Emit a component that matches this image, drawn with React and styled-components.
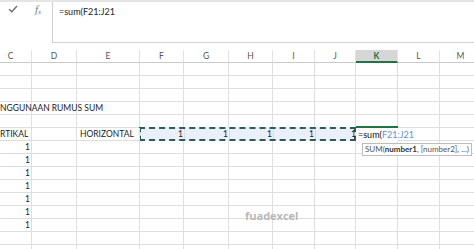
import React from 'react';
import styled, { createGlobalStyle, css } from 'styled-components';

const GlobalStyle = createGlobalStyle`
  body {
    margin: 0;
    background: #ffffff;
    overflow: hidden;
    font-family: Lato, "Open Sans", sans-serif;
  }
`;

const COLS = [
  { key: 'C', width: 42 },
  { key: 'D', width: 45 },
  { key: 'E', width: 63 },
  { key: 'F', width: 44 },
  { key: 'G', width: 45 },
  { key: 'H', width: 44 },
  { key: 'I', width: 42 },
  { key: 'J', width: 41 },
  { key: 'K', width: 42 },
  { key: 'L', width: 42 },
  { key: 'M', width: 42 },
];

const gridTemplate = COLS.map((c) => `${c.width}px`).join(' ');

const Screen = styled.div`
  position: relative;
  width: 474px;
  height: 249px;
  overflow: hidden;
`;

const FormulaBar = styled.div`
  display: flex;
  height: 43px;
  border-top: 2px solid #e4e4e4;
  box-sizing: border-box;
`;

const FormulaTools = styled.div`
  width: 52px;
  display: flex;
  align-items: flex-start;
  padding-top: 3px;
  box-sizing: border-box;
`;

const ToolIcon = styled.span`
  width: 26px;
  display: flex;
  justify-content: center;
  color: #6a6a6a;
`;

const FxGlyph = styled.span`
  font-family: "Liberation Serif", serif;
  font-style: italic;
  font-size: 11px;
  color: #7a7a7a;
  margin-left: -2px;
  margin-top: -1px;
  line-height: 10px;

  sub {
    font-size: 7px;
    vertical-align: -1px;
  }
`;

const FormulaInput = styled.div`
  flex: 1;
  border-left: 1px solid #d0d0d0;
  border-bottom: 1px solid #d0d0d0;
  padding: 3px 0 0 6px;
  font-size: 9px;
  color: #222;
  line-height: 13px;
`;

const Gap = styled.div`
  height: 7px;
`;

const Sheet = styled.div`
  display: grid;
  grid-template-columns: ${gridTemplate};
  grid-auto-rows: 13px;
  margin-left: -10px;
`;

const HeadCell = styled.div`
  display: flex;
  align-items: center;
  justify-content: center;
  font-size: 8.5px;
  color: #555;
  border-right: 1px solid #e2e2e2;
  border-bottom: 1px solid #c9c9c9;
  box-sizing: border-box;
  ${(p) =>
    p.$active &&
    css`
      background: #d6d6d6;
      color: #217346;
      font-weight: 700;
      border-bottom: 2px solid #217346;
    `}
`;

const Cell = styled.div`
  display: flex;
  align-items: center;
  justify-content: ${(p) => (p.$right ? 'flex-end' : 'flex-start')};
  padding: ${(p) => (p.$right ? '0 1px 0 0' : `0 0 0 ${p.$pad ?? 3}px`)};
  font-size: 8.5px;
  color: #222;
  white-space: nowrap;
  overflow: visible;
  border-right: 1px solid #dedede;
  border-bottom: 1px solid #dedede;
  box-sizing: border-box;
  position: relative;
  z-index: ${(p) => (p.$over ? 4 : 1)};
`;

const Range = styled.div`
  grid-column: span ${(p) => p.$span};
  display: grid;
  grid-template-columns: ${(p) => p.$cols};
  background: #e9f0f9;
  border: 2px dashed #2e5b52;
  margin: -1px 0 0 -1px;
  box-sizing: border-box;
  height: 14px;
  position: relative;
  z-index: 3;
`;

const RangeCell = styled.div`
  display: flex;
  align-items: center;
  justify-content: flex-end;
  padding-right: 1px;
  font-size: 8.5px;
  color: #222;
  border-right: 1px solid #d7dde6;
  &:last-child {
    border-right: none;
  }
`;

const EditCell = styled.div`
  position: relative;
  z-index: 4;
  display: flex;
  align-items: center;
  padding-left: 2px;
  font-size: 9px;
  color: #111;
  white-space: nowrap;
  border-top: 2px solid #217346;
  margin-top: -2px;
  height: 15px;
  box-sizing: border-box;
`;

const RefText = styled.span`
  color: #5d8fd6;
`;

const Caret = styled.span`
  display: inline-block;
  width: 1px;
  height: 10px;
  background: #222;
  margin-left: 1px;
`;

const Tip = styled.div`
  position: absolute;
  left: 362px;
  top: 143px;
  height: 11px;
  padding: 0 2px;
  border: 1px solid #bdbdbd;
  background: #fff;
  font-size: 8px;
  color: #555;
  line-height: 11px;
  white-space: nowrap;
  z-index: 5;

  b {
    color: #333;
  }
`;

const Watermark = styled.div`
  position: absolute;
  left: 245px;
  top: 208px;
  font-family: "Open Sans", sans-serif;
  font-weight: 700;
  font-size: 11px;
  color: #b8b8b8;
  z-index: 6;
`;

const CheckIcon = () => (
  <svg width="10" height="8" viewBox="0 0 10 8">
    <path d="M1 4.2 L3.8 6.8 L9 1" fill="none" stroke="#6f6f6f" strokeWidth="1.4" />
  </svg>
);

const ROW_COUNT = 15;

const rowContent = (r) => {
  const cells = {};
  if (r === 3) cells.C = { text: 'NGGUNAAN RUMUS SUM', pad: 10 };
  if (r >= 6 && r <= 12) cells.C = { text: '1', right: true };
  return cells;
};

const rangeKeys = ['F', 'G', 'H', 'I', 'J'];
const rangeCols = COLS.filter((c) => rangeKeys.includes(c.key))
  .map((c) => `${c.width}px`)
  .join(' ');

const App = () => {
  const rows = [];
  for (let r = 0; r < ROW_COUNT; r++) {
    if (r === 5) {
      rows.push(
        <Cell key={`${r}C`} $pad={10} $over>
          RTIKAL
        </Cell>,
        <Cell key={`${r}D`} />,
        <Cell key={`${r}E`} $over>
          HORIZONTAL
        </Cell>,
        <Range key={`${r}R`} $span={5} $cols={rangeCols}>
          {rangeKeys.map((k) => (
            <RangeCell key={k}>1</RangeCell>
          ))}
        </Range>,
        <EditCell key={`${r}K`}>
          =sum(<RefText>F21:J21</RefText>
          <Caret />
        </EditCell>,
        <Cell key={`${r}L`} />,
        <Cell key={`${r}M`} />
      );
      continue;
    }
    const data = rowContent(r);
    COLS.forEach((c) => {
      const d = data[c.key];
      rows.push(
        <Cell key={`${r}${c.key}`} $right={d?.right} $pad={d?.pad} $over={!!d}>
          {d?.text}
        </Cell>
      );
    });
  }

  return (
    <Screen>
      <GlobalStyle />
      <FormulaBar>
        <FormulaTools>
          <ToolIcon>
            <CheckIcon />
          </ToolIcon>
          <ToolIcon>
            <FxGlyph>
              f<sub>x</sub>
            </FxGlyph>
          </ToolIcon>
        </FormulaTools>
        <FormulaInput>=sum(F21:J21</FormulaInput>
      </FormulaBar>
      <Gap />
      <Sheet>
        {COLS.map((c) => (
          <HeadCell key={c.key} $active={c.key === 'K'}>
            {c.key}
          </HeadCell>
        ))}
        {rows}
      </Sheet>
      <Tip>
        SUM(<b>number1</b>, [number2], ...)
      </Tip>
      <Watermark>fuadexcel</Watermark>
    </Screen>
  );
};

export default App;
